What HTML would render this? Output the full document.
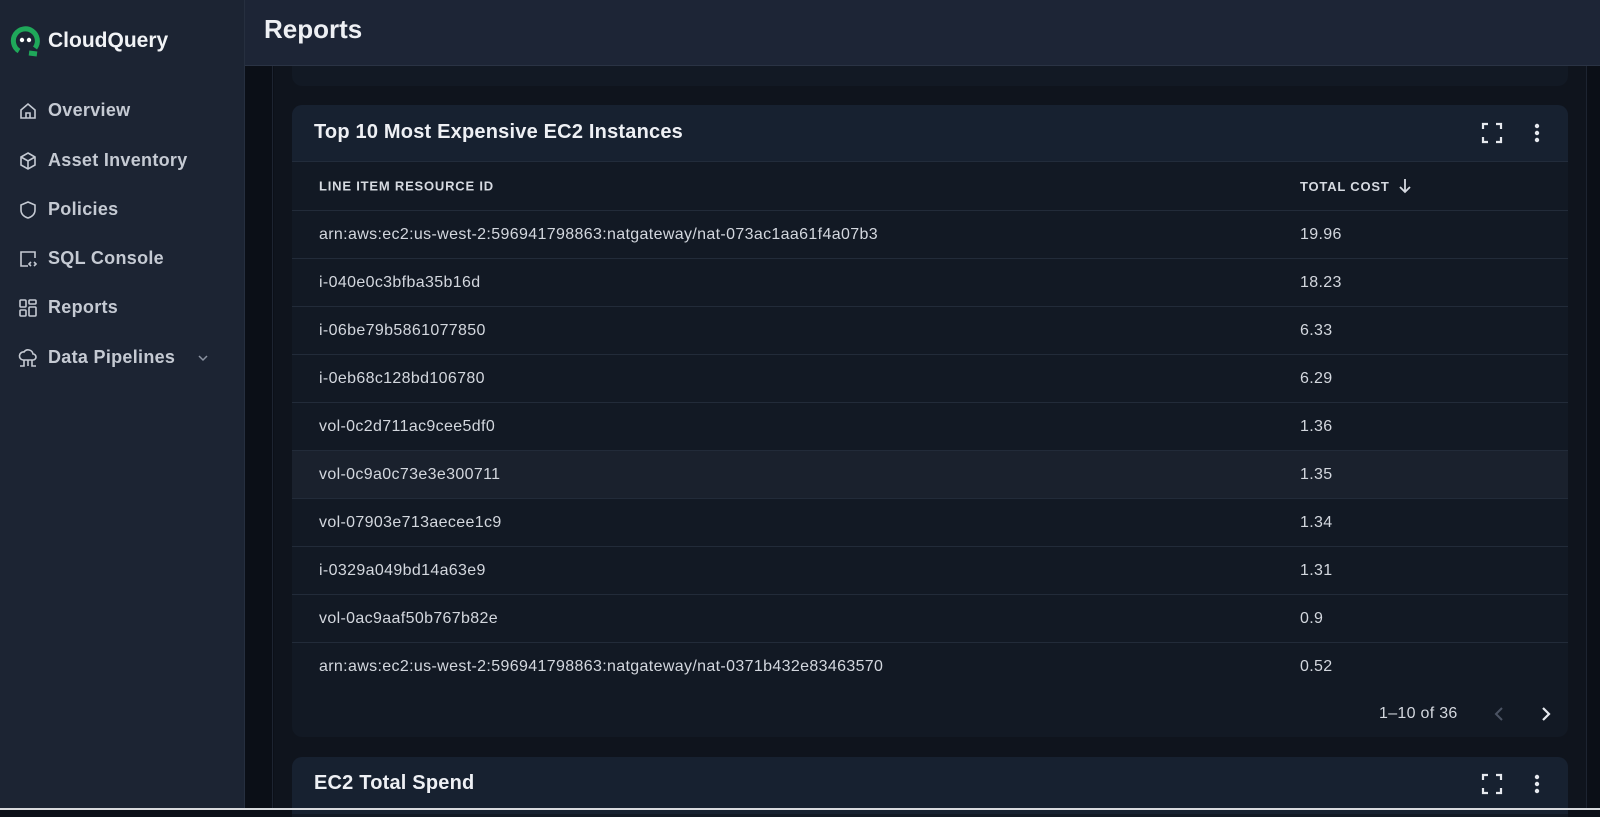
<!DOCTYPE html>
<html><head><style>
*{box-sizing:border-box;margin:0;padding:0}
body{width:1600px;height:810px;overflow:hidden;background:#0c1018;font-family:"Liberation Sans",sans-serif;position:relative;color:#e6e9ee}
.side{position:absolute;left:0;top:0;width:245px;height:810px;background:#1c2433;border-right:1px solid #262f3f;z-index:5}
.logo{position:absolute;left:9px;top:24px;display:flex;align-items:center}
.logo span{font-size:21px;font-weight:bold;color:#f1f3f6;margin-left:5px;letter-spacing:0px}
.nav{position:absolute;left:18px;display:flex;align-items:center;font-size:18px;font-weight:bold;color:#c5cad3;letter-spacing:0.3px}
.nav svg{margin-right:10px}
.hdr{position:absolute;left:245px;top:0;width:1355px;height:66px;background:#1d2536;border-bottom:1px solid #2a3344;z-index:5}
.hdr h1{position:absolute;left:19px;top:14px;font-size:26px;font-weight:bold;color:#eef0f4}
.strip{position:absolute;left:245px;top:66px;width:28px;height:744px;background:#0b0f17;border-right:1px solid #1d2431}
.inner{position:absolute;left:274px;top:66px;width:1312px;height:744px;background:#0f141d}
.rstrip{position:absolute;left:1586px;top:66px;width:14px;height:744px;background:#0b0f17;border-left:1px solid #1d2431}
.card{position:absolute;left:292px;width:1276px;background:#121924;border-radius:10px;overflow:hidden}
.ch{height:57px;background:#172130;border-bottom:1px solid #222c3b;position:relative}
.ch h2{position:absolute;left:22px;top:16px;font-size:20px;font-weight:bold;color:#eef0f4;letter-spacing:0.2px}
.ic{position:absolute;top:17px}
.th{height:49px;border-bottom:1px solid #222b39;position:relative;font-size:13px;font-weight:bold;letter-spacing:0.8px;color:#d6dae1}
.row{height:48px;border-bottom:1px solid #222b39;position:relative;font-size:16px;color:#d3d7de;letter-spacing:0.35px}
.c1{position:absolute;left:27px;top:50%;transform:translateY(-50%)}
.c2{position:absolute;left:1008px;top:50%;transform:translateY(-50%)}
.hl{background:#1a212d}
.pg{height:48px;position:relative;font-size:16px;color:#d3d7de;letter-spacing:0.3px}
</style></head><body>
<div class="side">
 <div class="logo">
  <svg width="34" height="34" viewBox="0 0 34 34" fill="none" stroke="#1fa85a" stroke-width="5"><path d="M26 24 A12 12 0 1 0 10 27"/><path d="M20 29 L28 30"/><circle cx="13" cy="16" r="2.2" fill="#fff" stroke="none"/><circle cx="20" cy="16" r="2.2" fill="#fff" stroke="none"/></svg>
  <span>CloudQuery</span></div>
 <div class="nav" style="top:100px"><svg width="20" height="20" viewBox="0 0 20 20" fill="none" stroke="#c5cad3" stroke-width="1.6"><path d="M3 9l7-6 7 6v8H3z"/><path d="M8 17v-5h4v5"/></svg>Overview</div>
 <div class="nav" style="top:150px"><svg width="20" height="20" viewBox="0 0 20 20" fill="none" stroke="#c5cad3" stroke-width="1.6"><path d="M10 2l7 4v8l-7 4-7-4V6z"/><path d="M3 6l7 4 7-4M10 10v8"/></svg>Asset Inventory</div>
 <div class="nav" style="top:199px"><svg width="20" height="20" viewBox="0 0 20 20" fill="none" stroke="#c5cad3" stroke-width="1.6"><path d="M10 2l7 3v5c0 4-3 7-7 8-4-1-7-4-7-8V5z"/></svg>Policies</div>
 <div class="nav" style="top:248px"><svg width="20" height="20" viewBox="0 0 20 20" fill="none" stroke="#c5cad3" stroke-width="1.6"><path d="M17 9V3H3v14h7"/><path d="M13 13l-2 2 2 2M16 13l2 2-2 2"/></svg>SQL Console</div>
 <div class="nav" style="top:297px"><svg width="20" height="20" viewBox="0 0 20 20" fill="none" stroke="#c5cad3" stroke-width="1.6"><rect x="2" y="2" width="6" height="7" rx="1"/><rect x="11" y="2" width="7" height="4" rx="1"/><rect x="2" y="12" width="6" height="6" rx="1"/><rect x="11" y="9" width="7" height="9" rx="1"/></svg>Reports</div>
 <div class="nav" style="top:347px"><svg width="20" height="20" viewBox="0 0 20 20" fill="none" stroke="#c5cad3" stroke-width="1.6"><path d="M5 12a4 4 0 0 1 1-8 5 5 0 0 1 9 2 3 3 0 0 1 0 6z"/><path d="M2 18h4v-6M10 12v6M14 12v6h4"/></svg>Data Pipelines<svg style="margin-left:22px" width="12" height="12" viewBox="0 0 12 12" fill="none" stroke="#8b93a1" stroke-width="1.5"><path d="M2 4l4 4 4-4"/></svg></div>
</div>
<div class="hdr"><h1>Reports</h1></div>
<div class="strip"></div><div class="inner"></div><div class="rstrip"></div>
<div class="card" style="top:66px;height:20px;background:#121924;border-radius:0 0 10px 10px"></div>
<div class="card" style="top:105px;height:632px">
 <div class="ch"><h2>Top 10 Most Expensive EC2 Instances</h2>
  <svg class="ic" style="left:1189px" width="22" height="22" viewBox="0 0 22 22" fill="none" stroke="#e6e9ee" stroke-width="2.2"><path d="M2 7V2h5M15 2h5v5M20 15v5h-5M7 20H2v-5"/></svg>
  <svg class="ic" style="left:1242px" width="6" height="22" viewBox="0 0 6 22" fill="#e6e9ee"><circle cx="3" cy="4" r="2.2"/><circle cx="3" cy="11" r="2.2"/><circle cx="3" cy="18" r="2.2"/></svg>
 </div>
 <div class="th"><span class="c1">LINE ITEM RESOURCE ID</span><span class="c2">TOTAL COST <svg style="vertical-align:-3px;margin-left:4px" width="14" height="16" viewBox="0 0 14 16" fill="none" stroke="#d6dae1" stroke-width="1.8"><path d="M7 1v13M2 9l5 5 5-5"/></svg></span></div>
 <div class="row"><span class="c1">arn:aws:ec2:us-west-2:596941798863:natgateway/nat-073ac1aa61f4a07b3</span><span class="c2">19.96</span></div>
 <div class="row"><span class="c1">i-040e0c3bfba35b16d</span><span class="c2">18.23</span></div>
 <div class="row"><span class="c1">i-06be79b5861077850</span><span class="c2">6.33</span></div>
 <div class="row"><span class="c1">i-0eb68c128bd106780</span><span class="c2">6.29</span></div>
 <div class="row"><span class="c1">vol-0c2d711ac9cee5df0</span><span class="c2">1.36</span></div>
 <div class="row hl"><span class="c1">vol-0c9a0c73e3e300711</span><span class="c2">1.35</span></div>
 <div class="row"><span class="c1">vol-07903e713aecee1c9</span><span class="c2">1.34</span></div>
 <div class="row"><span class="c1">i-0329a049bd14a63e9</span><span class="c2">1.31</span></div>
 <div class="row"><span class="c1">vol-0ac9aaf50b767b82e</span><span class="c2">0.9</span></div>
 <div class="row" style="border-bottom:none"><span class="c1">arn:aws:ec2:us-west-2:596941798863:natgateway/nat-0371b432e83463570</span><span class="c2">0.52</span></div>
 <div class="pg"><span style="position:absolute;left:1087px;top:14px">1–10 of 36</span>
  <svg style="position:absolute;left:1202px;top:15px" width="10" height="16" viewBox="0 0 10 16" fill="none" stroke="#4b5363" stroke-width="2"><path d="M8 2L2 8l6 6"/></svg>
  <svg style="position:absolute;left:1249px;top:15px" width="10" height="16" viewBox="0 0 10 16" fill="none" stroke="#e6e9ee" stroke-width="2.2"><path d="M2 2l6 6-6 6"/></svg>
 </div>
</div>
<div class="card" style="top:757px;height:60px;border-radius:10px 10px 0 0">
 <div class="ch" style="background:#172130;border:none"><h2 style="top:15px">EC2 Total Spend</h2>
  <svg class="ic" style="left:1189px;top:16px" width="22" height="22" viewBox="0 0 22 22" fill="none" stroke="#e6e9ee" stroke-width="2.2"><path d="M2 7V2h5M15 2h5v5M20 15v5h-5M7 20H2v-5"/></svg>
  <svg class="ic" style="left:1242px;top:16px" width="6" height="22" viewBox="0 0 6 22" fill="#e6e9ee"><circle cx="3" cy="4" r="2.2"/><circle cx="3" cy="11" r="2.2"/><circle cx="3" cy="18" r="2.2"/></svg>
 </div>
</div>
<div style="position:absolute;left:0;top:808px;width:1600px;height:2px;background:#d8dadd;z-index:9"></div>
</body></html>
